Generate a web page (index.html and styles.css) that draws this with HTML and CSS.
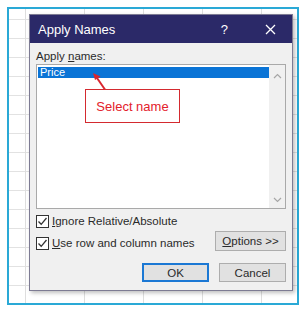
FILE: index.html
```html
<!doctype html>
<html>
<head>
  <link rel="stylesheet" href="styles.css">
</head>
<body>
<div class="frame">
  <div class="dialog">
    <div class="titlebar">
      <span class="title">Apply Names</span>
      <span class="help">?</span>
      <svg class="close" width="11" height="11" viewBox="0 0 11 11"><path d="M1 1 L10 10 M10 1 L1 10" stroke="#fff" stroke-width="1.3"/></svg>
    </div>
    <div class="body">
      <div class="label">Apply <u>n</u>ames:</div>
      <div class="listbox">
        <div class="list">
          <div class="item selected">Price</div>
        </div>
        <div class="scrollbar">
          <svg width="9" height="6" viewBox="0 0 9 6"><path d="M1 5 L4.5 1.5 L8 5" fill="none" stroke="#a6a6a6" stroke-width="1.2"/></svg>
          <svg width="9" height="6" viewBox="0 0 9 6"><path d="M1 1 L4.5 4.5 L8 1" fill="none" stroke="#a6a6a6" stroke-width="1.2"/></svg>
        </div>
        <svg class="arrow" width="80" height="30" viewBox="0 0 80 30">
          <path d="M69 26 L60 13" stroke="#d9262e" stroke-width="2"/>
          <path d="M56 8 L63.5 11.5 L58 15 Z" fill="#d9262e"/>
        </svg>
        <div class="callout">Select name</div>
      </div>
      <div class="checks-row">
        <div class="checks">
          <label class="check"><span class="box"><svg width="11" height="11" viewBox="0 0 11 11"><path d="M1.5 5.5 L4.2 8.3 L9.5 2" fill="none" stroke="#333" stroke-width="1.3"/></svg></span><u>I</u>gnore Relative/Absolute</label>
          <label class="check"><span class="box"><svg width="11" height="11" viewBox="0 0 11 11"><path d="M1.5 5.5 L4.2 8.3 L9.5 2" fill="none" stroke="#333" stroke-width="1.3"/></svg></span><u>U</u>se row and column names</label>
        </div>
        <div class="btn options"><u>O</u>ptions &gt;&gt;</div>
      </div>
      <div class="buttons">
        <div class="btn ok">OK</div>
        <div class="btn">Cancel</div>
      </div>
    </div>
  </div>
</div>
</body>
</html>
```

FILE: styles.css
```css
body {
  margin: 0;
  background: #fff;
  font-family: "Liberation Sans", Arial, sans-serif;
  font-size: 12px;
  color: #2a2a2a;
}
.frame {
  margin: 7px;
  border: 2px solid #2aa9d6;
  background-color: #fff;
  background-image:
    repeating-linear-gradient(to right, transparent 0, transparent 16px, #dedede 16px, #dedede 17px, transparent 17px, transparent 59px),
    repeating-linear-gradient(to bottom, transparent 0, transparent 10px, #e2e2e2 10px, #e2e2e2 11px, transparent 11px, transparent 19px);
  padding: 5px 0 0 20px;
  box-sizing: border-box;
  width: 292px;
  height: 298px;
}
.dialog {
  width: 264px;
  height: 277px;
  box-sizing: border-box;
  border: 1px solid #7d7b93;
  background: #f0f0f0;
  box-shadow: 2px 2px 4px rgba(0,0,0,0.25);
  display: flex;
  flex-direction: column;
}
.titlebar {
  height: 28px;
  background: #2b2968;
  color: #fff;
  display: flex;
  align-items: center;
  padding-left: 8px;
  flex-shrink: 0;
}
.title {
  font-size: 13px;
  flex: 1;
}
.help {
  font-size: 13px;
  margin-right: 37px;
}
.close {
  margin-right: 16px;
}
.body {
  padding: 6px 6px 0 6px;
}
.label {
  font-size: 11.5px;
  height: 15px;
  line-height: 15px;
}
.listbox {
  position: relative;
  height: 145px;
  border: 1px solid #a9a9a9;
  background: #fff;
  display: flex;
  box-sizing: border-box;
}
.list {
  flex: 1;
  padding: 2px 0 0 1px;
}
.item {
  height: 11px;
  line-height: 11px;
  font-size: 11px;
  padding-left: 2px;
}
.selected {
  background: #0a74d6;
  color: #fff;
}
.scrollbar {
  width: 16px;
  background: #f0f0f0;
  display: flex;
  flex-direction: column;
  justify-content: space-between;
  align-items: center;
  padding: 8px 0 5px;
}
.arrow {
  position: absolute;
  left: 0;
  top: 0;
}
.callout {
  position: absolute;
  left: 48px;
  top: 24px;
  width: 95px;
  height: 34px;
  box-sizing: border-box;
  border: 1px solid #d42a2f;
  background: #fff;
  color: #e3212b;
  font-size: 13px;
  display: flex;
  align-items: center;
  justify-content: center;
}
.checks-row {
  display: flex;
  justify-content: space-between;
  margin-top: 6px;
}
.checks {
  display: flex;
  flex-direction: column;
  gap: 10px;
}
.check {
  display: flex;
  align-items: center;
  height: 12px;
  font-size: 11.5px;
}
.box {
  width: 11px;
  height: 11px;
  border: 1px solid #333;
  background: #fff;
  margin-right: 3px;
  display: flex;
}
.btn {
  height: 20px;
  box-sizing: border-box;
  border: 1px solid #adadad;
  background: #e1e1e1;
  font-size: 11.5px;
  display: flex;
  align-items: center;
  justify-content: center;
}
.options {
  width: 71px;
  margin-top: 16px;
}
.buttons {
  display: flex;
  justify-content: flex-end;
  gap: 10px;
  margin-top: 12px;
}
.buttons .btn {
  width: 67px;
  height: 19px;
}
.ok {
  border: 2px solid #1b78d4;
}
```
